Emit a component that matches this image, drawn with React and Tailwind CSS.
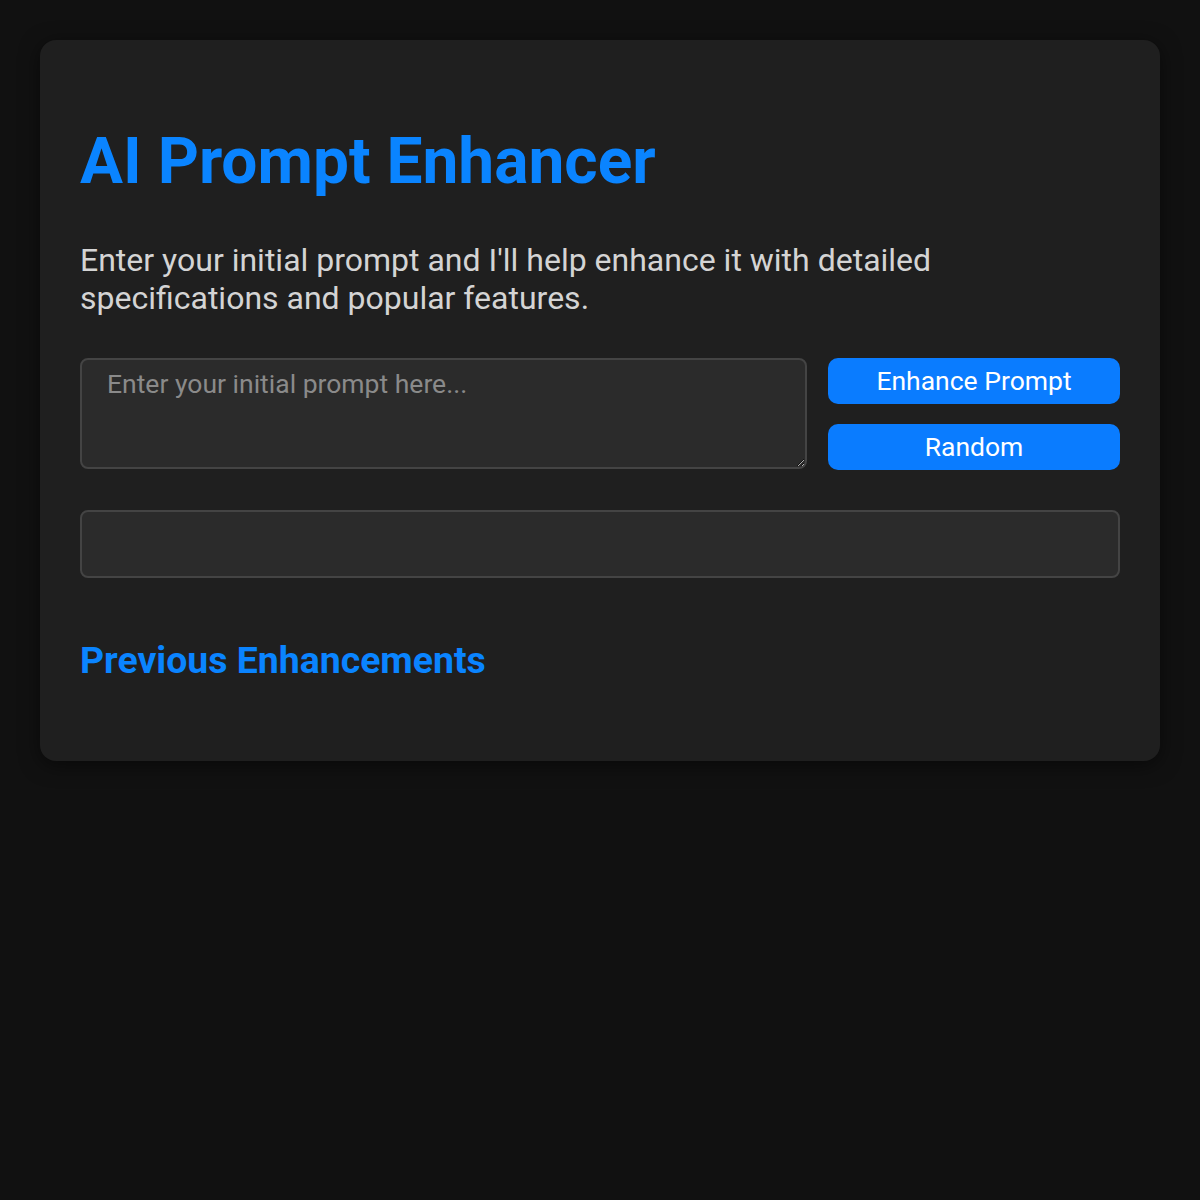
import React, { useState } from "react";

export default function App() {
  const [prompt, setPrompt] = useState("");

  return (
    <div className="min-h-[1200px] bg-[#111111] p-10 font-['Roboto',sans-serif]">
      <div className="rounded-2xl bg-[#1f1f1f] px-10 pt-[84px] pb-[78px] shadow-[0_4px_20px_rgba(0,0,0,0.5)]">
        <h1 className="text-[64px] font-bold leading-[1.2] text-[#0a84ff]">AI Prompt Enhancer</h1>

        <p className="mt-[40px] text-[32px] leading-[38px] text-[#d4d4d4]">
          Enter your initial prompt and I'll help enhance it with detailed
          <br />
          specifications and popular features.
        </p>

        <div className="mt-[41px] flex gap-[21px]">
          <textarea
            value={prompt}
            onChange={(e) => setPrompt(e.target.value)}
            placeholder="Enter your initial prompt here..."
            className="h-[111px] flex-1 rounded-lg border-2 border-[#444444] bg-[#2b2b2b] px-[25px] py-[4px] text-[26.5px] text-white placeholder:text-[#8a8a8a] outline-none"
          />
          <div className="flex w-[292px] flex-col gap-[20px]">
            <button className="h-[46px] rounded-[10px] bg-[#0a7cff] text-[26.5px] text-white">Enhance Prompt</button>
            <button className="h-[46px] rounded-[10px] bg-[#0a7cff] text-[26.5px] text-white">Random</button>
          </div>
        </div>

        <div className="mt-[40px] h-[68px] rounded-lg border-2 border-[#444444] bg-[#2b2b2b]" />

        <h2 className="mt-[60px] text-[37.4px] font-bold leading-[1.2] text-[#0a84ff]">Previous Enhancements</h2>
      </div>
    </div>
  );
}
